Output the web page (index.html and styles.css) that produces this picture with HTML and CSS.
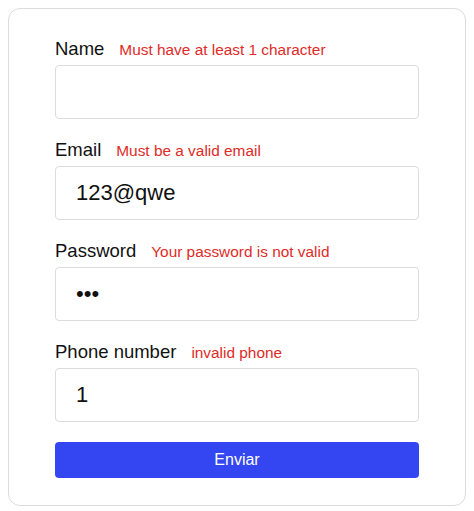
FILE: index.html
```html
<!DOCTYPE html>
<html lang="en">
<head>
    <meta charset="UTF-8">
    <meta name="viewport" content="width=device-width, initial-scale=1.0">
    <title>Form</title>
    <link rel="stylesheet" href="styles.css">
</head>
<body>
    <form class="card">
        <div class="field">
            <div class="label-row">
                <label for="name">Name</label>
                <span class="error">Must have at least 1 character</span>
            </div>
            <input type="text" id="name" value="">
        </div>

        <div class="field">
            <div class="label-row">
                <label for="email">Email</label>
                <span class="error">Must be a valid email</span>
            </div>
            <input type="text" id="email" value="123@qwe">
        </div>

        <div class="field">
            <div class="label-row">
                <label for="password">Password</label>
                <span class="error">Your password is not valid</span>
            </div>
            <input type="password" id="password" value="123">
        </div>

        <div class="field">
            <div class="label-row">
                <label for="phone">Phone number</label>
                <span class="error">invalid phone</span>
            </div>
            <input type="text" id="phone" value="1">
        </div>

        <button type="button">Enviar</button>
    </form>
</body>
</html>
```

FILE: styles.css
```css
body {
    margin: 8px;
    font-family: "Liberation Sans", Arial, sans-serif;
    background-color: #fff;
    color: #111;
}
.card {
    border: 1px solid #dcdcdc;
    border-radius: 12px;
    padding: 29px 46px 27px;
}
.field {
    margin-bottom: 20px;
}
.label-row {
    display: flex;
    align-items: baseline;
    gap: 15px;
    height: 22px;
    margin-bottom: 5px;
}
label {
    font-size: 18.5px;
    line-height: 22px;
}
.error {
    font-size: 15.4px;
    color: #e02b27;
}
input {
    display: block;
    box-sizing: border-box;
    width: 100%;
    height: 54px;
    padding: 0 20px;
    border: 1px solid #dcdcdc;
    border-radius: 4px;
    font-family: "Liberation Sans", Arial, sans-serif;
    font-size: 22px;
    color: #111;
    outline: none;
}
button {
    display: block;
    width: 100%;
    height: 36px;
    border: none;
    border-radius: 4px;
    background-color: #3346f2;
    color: #fff;
    font-family: "Liberation Sans", Arial, sans-serif;
    font-size: 16px;
    cursor: pointer;
}
```
